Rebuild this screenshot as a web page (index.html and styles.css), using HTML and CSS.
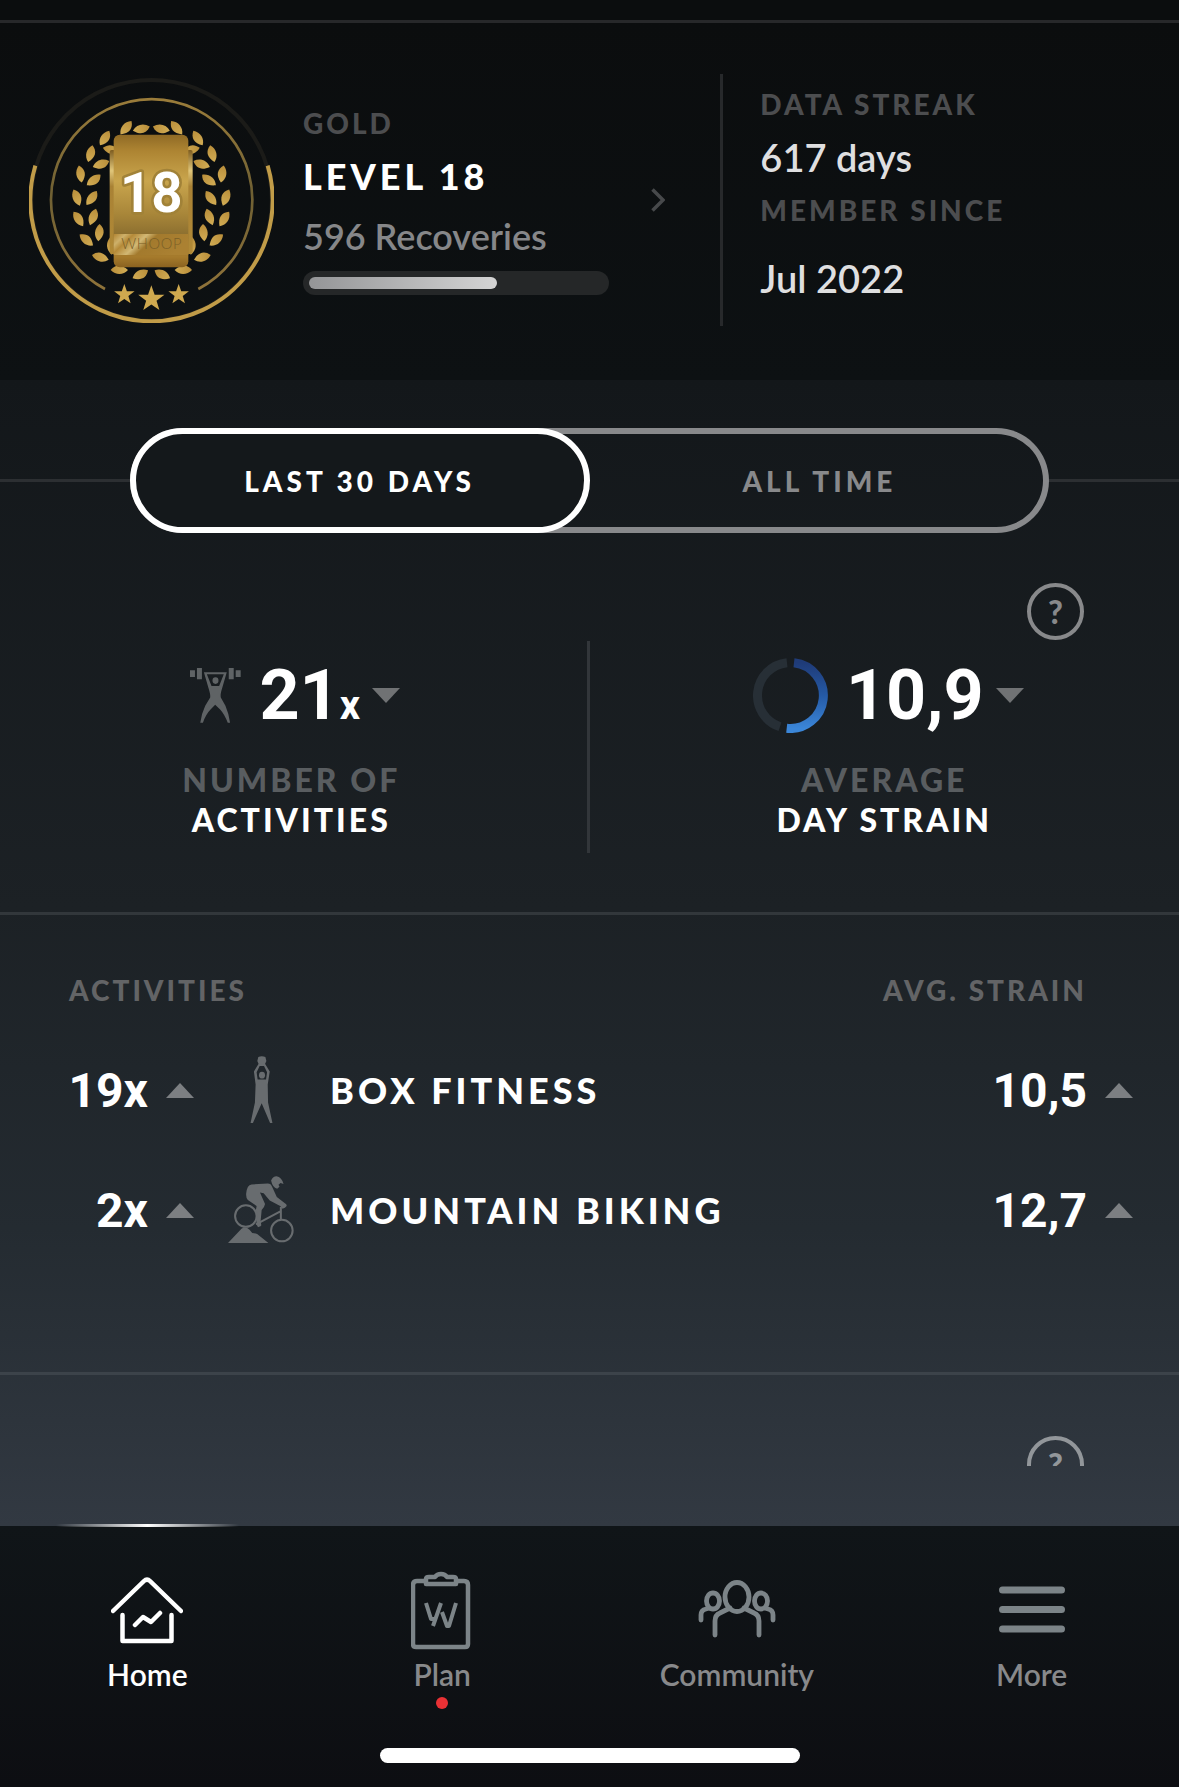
FILE: index.html
```html
<!DOCTYPE html>
<html lang="en">
<head>
    <meta charset="UTF-8">
    <meta name="viewport" content="width=device-width, initial-scale=1.0">
    <title>Profile</title>
    <link rel="stylesheet" href="styles.css">
</head>
<body>
    <!-- Level and membership -->
    <header class="profile">
        <a class="level" href="#level">
            <svg class="badge" viewBox="87 84 735 735" aria-hidden="true">
                <defs>
                    <linearGradient id="band" x1="0" y1="0" x2="0" y2="1">
                        <stop offset="0" stop-color="#8f6a25"/>
                        <stop offset=".12" stop-color="#ad8432"/>
                        <stop offset=".35" stop-color="#c9a54d"/>
                        <stop offset=".6" stop-color="#a88639"/>
                        <stop offset=".75" stop-color="#8d7030"/>
                        <stop offset=".92" stop-color="#a67b2c"/>
                        <stop offset="1" stop-color="#8a6220"/>
                    </linearGradient>
                    <linearGradient id="rail" x1="0" y1="0" x2="0" y2="1">
                        <stop offset="0" stop-color="#7d5c20"/>
                        <stop offset=".2" stop-color="#e0c67a"/>
                        <stop offset=".35" stop-color="#a98235"/>
                        <stop offset="1" stop-color="#b08936"/>
                    </linearGradient>
                    <linearGradient id="clasp" x1="0" y1="0" x2="1" y2=".3">
                        <stop offset="0" stop-color="#b18431"/>
                        <stop offset=".15" stop-color="#cdb06a"/>
                        <stop offset=".25" stop-color="#b58a38"/>
                        <stop offset=".42" stop-color="#d2b874"/>
                        <stop offset=".55" stop-color="#a37a2d"/>
                        <stop offset="1" stop-color="#ab8132"/>
                    </linearGradient>
                    <linearGradient id="leaf-fill" x1="0" y1="0" x2="0" y2="1">
                        <stop offset="0" stop-color="#b98e3a"/>
                        <stop offset="1" stop-color="#d2ad55"/>
                    </linearGradient>
                    <linearGradient id="inner" x1="0" y1="0" x2="0" y2="1">
                        <stop offset="0" stop-color="#9a7c3a"/>
                        <stop offset=".5" stop-color="#6f6033"/>
                        <stop offset="1" stop-color="#8f733a"/>
                    </linearGradient>
                    <path id="leaf" d="M2-26C19-10 18 8-2 26C-17 10-15-12 2-26z" fill="url(#leaf-fill)"/>
                    <path id="star" d="M0-10L2.4-3.2L9.6-3.1L3.8 1.2L5.9 8.1L0 4L-5.9 8.1L-3.8 1.2L-9.6-3.1L-2.4-3.2z" fill="#cfa94f"/>
                    <g id="branch">
                        <use href="#leaf" transform="translate(378 233) rotate(35)"/>
                        <use href="#leaf" transform="translate(424 236) rotate(72)"/>
                        <use href="#leaf" transform="translate(314 264) rotate(28)"/>
                        <use href="#leaf" transform="translate(271 311) rotate(10)"/>
                        <use href="#leaf" transform="translate(241 372) rotate(-14)"/>
                        <use href="#leaf" transform="translate(230 443) rotate(-26)"/>
                        <use href="#leaf" transform="translate(235 507) rotate(-38)"/>
                        <use href="#leaf" transform="translate(259 570) rotate(-55)"/>
                        <use href="#leaf" transform="translate(301 622) rotate(-78)"/>
                        <use href="#leaf" transform="translate(358 660) rotate(-94)"/>
                        <use href="#leaf" transform="translate(421 673) rotate(58)"/>
                        <use href="#leaf" transform="translate(334 300) rotate(-80)"/>
                        <use href="#leaf" transform="translate(303 342) rotate(66)"/>
                        <use href="#leaf" transform="translate(281 390) rotate(48)"/>
                        <use href="#leaf" transform="translate(275 444) rotate(32)"/>
                        <use href="#leaf" transform="translate(279 501) rotate(16)"/>
                        <use href="#leaf" transform="translate(297 548) rotate(0)"/>
                        <use href="#leaf" transform="translate(333 588) rotate(-10)"/>
                    </g>
                </defs>
                <circle cx="454.500" cy="451" r="361" fill="none" stroke="#1b1b18" stroke-width="12"/>
                <path d="M106 347A363.500 363.500 0 1 0 803 347" fill="none" stroke="#c19c48" stroke-width="12"/>
                <path d="M315 717A302 302 0 1 1 595 717" fill="none" stroke="url(#inner)" stroke-width="8"/>
                <use href="#branch"/>
                <use href="#branch" transform="translate(908 0) scale(-1 1)"/>
                <rect x="329" y="300" width="18" height="312" rx="6" fill="url(#rail)"/>
                <rect x="560" y="300" width="18" height="312" rx="6" fill="url(#rail)"/>
                <rect x="341" y="254" width="224" height="398" rx="18" fill="url(#band)"/>
                <rect x="341" y="552" width="224" height="63" fill="url(#clasp)"/>
                <text class="badge-brand" x="455" y="598" text-anchor="middle">WHOOP</text>
                <text class="badge-number" x="454" y="486" text-anchor="middle">18</text>
                <use href="#star" transform="translate(373 734) scale(3.2)"/>
                <use href="#star" transform="translate(454 747) scale(4.1)"/>
                <use href="#star" transform="translate(536 734) scale(3.2)"/>
            </svg>
            <div class="level-text">
                <div class="caption">GOLD</div>
                <div class="level-name">LEVEL 18</div>
                <div class="recoveries">596 Recoveries</div>
                <div class="bar"><div class="bar-fill" style="width: 64%"></div></div>
            </div>
            <svg class="chevron" viewBox="0 0 14 24" aria-hidden="true">
                <path d="M1.500 1.500L12 12L1.500 22.500" fill="none" stroke="#47494b" stroke-width="3.500"/>
            </svg>
        </a>
        <div class="member">
            <div class="caption">DATA STREAK</div>
            <div class="member-value">617 days</div>
            <div class="caption">MEMBER SINCE</div>
            <div class="member-value since">Jul 2022</div>
        </div>
    </header>

    <main>
        <div class="period">
            <div class="toggle">
                <button type="button" class="active">LAST 30 DAYS</button>
                <button type="button">ALL TIME</button>
            </div>
        </div>

        <button type="button" class="help" aria-label="Help">?</button>

        <section class="stats">
            <div class="stat">
                <div class="stat-value">
                    <svg class="lifter" viewBox="96 104 154 170" fill="#5f6365" aria-hidden="true">
                        <path d="M96 114h15v20h-15zM117 107h15v34h-15zM213 107h15v34h-15zM234 114h15v20h-15z"/>
                        <path d="M138 120H207L193 168Q187 186 189 196L203 221Q213 244 217 272H210Q200 246 187 232L172 218L158 232Q144 246 135 272H127Q131 244 142 221L157 196Q158 186 152 168zM147 126L161 161H184L198 126z" fill-rule="evenodd"/>
                        <ellipse cx="173" cy="145" rx="9" ry="10"/>
                    </svg>
                    <span class="number">21<small>x</small></span>
                    <span class="arrow down"></span>
                </div>
                <div class="stat-label">NUMBER OF</div>
                <div class="stat-name">ACTIVITIES</div>
            </div>
            <div class="stat">
                <div class="stat-value">
                    <svg class="ring" viewBox="0 0 75 75" fill="none" stroke-width="9" aria-hidden="true">
                        <defs>
                            <linearGradient id="strain" x1="0" y1="0" x2="0" y2="1">
                                <stop offset="0" stop-color="#1f3b78"/>
                                <stop offset=".5" stop-color="#255aa6"/>
                                <stop offset="1" stop-color="#3b86d8"/>
                            </linearGradient>
                        </defs>
                        <path d="M41 4.700A33 33 0 1 1 33.700 70.300" stroke="url(#strain)"/>
                        <path d="M27 68.800A33 33 0 0 1 34 4.700" stroke="#272f36"/>
                    </svg>
                    <span class="number">10,9</span>
                    <span class="arrow down"></span>
                </div>
                <div class="stat-label">AVERAGE</div>
                <div class="stat-name">DAY STRAIN</div>
            </div>
        </section>

        <section class="activities">
            <table>
                <thead>
                    <tr>
                        <th class="head-left" colspan="4">ACTIVITIES</th>
                        <th class="head-right">AVG. STRAIN</th>
                        <td></td>
                    </tr>
                </thead>
                <tbody>
                    <tr>
                        <td class="count">19x</td>
                        <td class="trend"><span class="arrow up"></span></td>
                        <td class="icon">
                            <svg viewBox="24 20 196 200" fill="#686c6f" aria-hidden="true">
                                <path d="M114 23Q124 18 135 23L138 35L134 44H115L111 35z"/>
                                <path d="M115 43H134L148 66L142 105L143 158L156 219H149L124 160L98 219H91L104 158L106 105L101 66zM118 50L109 68L112 90H137L140 68L131 50z" fill-rule="evenodd"/>
                                <ellipse cx="125" cy="77" rx="9" ry="10"/>
                            </svg>
                        </td>
                        <td class="name">BOX FITNESS</td>
                        <td class="strain">10,5</td>
                        <td class="trend"><span class="arrow up"></span></td>
                    </tr>
                    <tr>
                        <td class="count">2x</td>
                        <td class="trend"><span class="arrow up"></span></td>
                        <td class="icon">
                            <svg viewBox="24 380 196 200" fill="#686c6f" aria-hidden="true">
                                <path d="M24 579L64 537Q76 528 88 540L96 549Q110 550 118 558L144 579z"/>
                                <path d="M152 393Q158 381 168 381Q184 384 189 404L180 401L174 406L177 412L170 418Q156 413 152 393z"/>
                                <path d="M94 405L142 402Q152 402 155 412L169 442L196 463Q202 469 193 474L186 477L179 469L148 453L130 431L119 429L134 463Q132 474 124 481L121 513L123 527L112 529L109 524L107 480L109 469L83 451Q77 445 78 432Q80 407 94 405z"/>
                                <g fill="none" stroke="#686c6f" stroke-width="6">
                                    <circle cx="77" cy="499" r="32"/>
                                    <circle cx="184" cy="542" r="32"/>
                                    <path d="M107 524L181 484M181 472V510M121 526L112 529"/>
                                </g>
                            </svg>
                        </td>
                        <td class="name">MOUNTAIN BIKING</td>
                        <td class="strain">12,7</td>
                        <td class="trend"><span class="arrow up"></span></td>
                    </tr>
                </tbody>
            </table>
        </section>

        <section class="more-stats">
            <div class="peek">
                <button type="button" class="help" aria-label="Help">?</button>
            </div>
        </section>
    </main>

    <!-- Bottom navigation -->
    <nav class="tabs">
        <ul>
            <li class="current">
                <a href="#home">
                    <svg width="72" height="80" viewBox="0 0 72 80" fill="none" stroke="#fff" stroke-width="4.500" stroke-linecap="round" stroke-linejoin="round" aria-hidden="true">
                        <path d="M2 41L33 11Q36 8 39 11L70 41M11.500 45V71H60.500V45M24 55L32 47L40 52L49 43"/>
                    </svg>
                    Home
                </a>
            </li>
            <li class="notice">
                <a href="#plan">
                    <svg width="62" height="80" viewBox="0 0 62 80" fill="none" stroke="#7c8488" stroke-width="4.500" stroke-linejoin="round" aria-hidden="true">
                        <path d="M15 11H6Q2 11 2 15V74Q2 77 5 77H54Q57 77 57 74V15Q57 11 53 11H45"/>
                        <path d="M15 14V9Q15 7 18 7H24Q26 4 30 4Q34 4 36 7H42Q45 7 45 9V14z"/>
                        <path d="M15 33L20 49H23M30 33L22 56M31 42L36 56H38L45 33" stroke-width="4"/>
                    </svg>
                    Plan
                </a>
            </li>
            <li>
                <a href="#community">
                    <svg width="78" height="80" viewBox="0 0 78 80" fill="none" stroke="#7c8488" stroke-width="4.800" stroke-linecap="round" aria-hidden="true">
                        <ellipse cx="39" cy="27" rx="12" ry="14.500"/>
                        <ellipse cx="15" cy="31" rx="6.500" ry="8"/>
                        <ellipse cx="63" cy="31" rx="6.500" ry="8"/>
                        <path d="M17 65V51Q17 45 22 43L32 38M61 65V51Q61 45 56 43L46 38M3 50V45Q3 40 8 39L11 38M75 50V45Q75 40 70 39L67 38"/>
                    </svg>
                    Community
                </a>
            </li>
            <li>
                <a href="#more">
                    <svg width="66" height="80" viewBox="0 0 66 80" stroke="#7c8488" stroke-width="7" stroke-linecap="round" aria-hidden="true">
                        <path d="M3.500 20H62.500M3.500 39.500H62.500M3.500 59H62.500"/>
                    </svg>
                    More
                </a>
            </li>
        </ul>
        <div class="home-indicator"></div>
    </nav>
</body>
</html>
```

FILE: styles.css
```css
* {
    box-sizing: border-box;
}
body {
    margin: 0;
    min-height: 100vh;
    display: flex;
    flex-direction: column;
    font-family: Lato, "Open Sans", sans-serif;
    color: #fff;
    background-color: #0b0d0e;
}
a {
    color: inherit;
    text-decoration: none;
}
button {
    font-family: inherit;
    color: inherit;
    background: none;
    border: none;
    padding: 0;
    cursor: pointer;
}
svg {
    display: block;
}

/* profile */
.profile {
    display: grid;
    grid-template-columns: 61.1% 1fr;
    margin-top: 20px;
    padding: 51px 0 54px;
    border-top: 3px solid #27282a;
    background: linear-gradient(#0b0d0e, #0d1113);
}
.level {
    display: flex;
    align-items: center;
    padding-left: 29px;
}
.badge {
    width: 245px;
    flex: none;
}
.badge-number {
    font: bold 164px Roboto, sans-serif;
    fill: #fff;
    stroke: #a18238;
    stroke-width: 16px;
    stroke-linejoin: round;
    paint-order: stroke;
}
.badge-brand {
    font: 300 44px Lato, sans-serif;
    letter-spacing: 2px;
    fill: #7a5f27;
}
.level-text {
    width: 306px;
    margin-left: 29px;
}
.caption {
    font-size: 28px;
    line-height: 34px;
    font-weight: 900;
    letter-spacing: 3px;
    color: #4c4d4f;
}
.level-name {
    font-size: 36px;
    line-height: 72px;
    font-weight: 900;
    letter-spacing: 4px;
}
.recoveries {
    font-size: 36px;
    line-height: 48px;
    font-weight: 600;
    color: #868789;
}
.bar {
    height: 24px;
    margin-top: 11px;
    padding: 6px;
    border-radius: 12px;
    background-color: #252728;
}
.bar-fill {
    height: 12px;
    border-radius: 6px;
    background: linear-gradient(90deg, #949597, #d4d4d4);
}
.chevron {
    width: 14px;
    margin-left: 42px;
}
.member {
    display: flex;
    flex-direction: column;
    justify-content: center;
    min-height: 252px;
    padding-left: 37px;
    border-left: 3px solid #27292b;
}
.member-value {
    font-size: 38px;
    line-height: 72px;
    font-weight: 600;
    color: #dfdfe0;
}
.since {
    margin-top: 15px;
}

/* stats */
main {
    flex: 1;
    background: linear-gradient(#13171a, #1c2125 46%, #242b31 74%, #323942);
}
.period {
    display: flex;
    align-items: center;
    padding-top: 48px;
}
.period::before,
.period::after {
    content: "";
    flex: 1;
    height: 3px;
    background-color: #2c2f32;
}
.toggle {
    display: flex;
    width: 78%;
    border-radius: 53px;
    box-shadow: inset 0 0 0 6px #88898b;
}
.toggle button {
    width: 50%;
    height: 105px;
    font-size: 28px;
    font-weight: 900;
    letter-spacing: 4px;
    color: #88898b;
}
.toggle .active {
    color: #fff;
    border: 6px solid #fff;
    border-radius: 53px;
    background-color: #14181b;
}
.help {
    display: block;
    width: 57px;
    height: 57px;
    margin: 50px 95px 0 auto;
    border: 4px solid #88898b;
    border-radius: 50%;
    font-size: 32px;
    line-height: 48px;
    font-weight: 900;
    color: #88898b;
}
.stats {
    display: grid;
    grid-template-columns: 1fr 1fr;
    padding: 1px 0 59px;
    border-bottom: 3px solid #32373b;
}
.stat {
    height: 212px;
    padding-right: 4px;
    border-right: 3px solid #32363a;
    text-align: center;
}
.stat:last-child {
    padding-right: 0;
    border-right: none;
}
.stat-value {
    display: flex;
    justify-content: center;
    align-items: center;
    height: 108px;
    margin-bottom: 11px;
    padding-left: 8px;
}
.lifter {
    width: 51px;
    margin-right: 18px;
}
.ring {
    width: 75px;
    margin-right: 18px;
}
.number {
    font-family: Roboto, sans-serif;
    font-size: 70px;
    font-weight: bold;
}
.number small {
    font-size: 40px;
}
.arrow {
    display: inline-block;
    border-left: 14px solid transparent;
    border-right: 14px solid transparent;
}
.down {
    margin-left: 12px;
    border-top: 15px solid #707274;
}
.up {
    border-bottom: 15px solid #7c7f82;
}
.stat-label,
.stat-name {
    font-size: 32px;
    line-height: 40px;
    font-weight: 900;
    letter-spacing: 3px;
}
.stat-label {
    color: #595d60;
}

/* activities */
.activities {
    padding: 35px 0 102px;
    border-bottom: 3px solid #3c434a;
}
table {
    width: 100%;
    border-collapse: collapse;
}
th,
td {
    padding: 0;
}
thead tr {
    height: 80px;
}
tbody tr {
    height: 120px;
}
th {
    font-size: 28px;
    font-weight: 900;
    letter-spacing: 3px;
    color: #636466;
}
.head-left {
    padding-left: 69px;
    text-align: left;
}
.head-right {
    text-align: right;
}
.count,
.strain {
    font-family: Roboto, sans-serif;
    font-size: 48px;
    font-weight: bold;
    text-align: right;
}
.count {
    width: 148px;
}
.trend {
    width: 80px;
    padding-left: 18px;
    line-height: 0;
}
.trend:last-child {
    width: 92px;
}
.icon {
    width: 66px;
}
.name {
    padding-left: 36px;
    font-size: 36px;
    font-weight: 900;
    letter-spacing: 4px;
}
.more-stats {
    padding: 61px 0 60px;
}
.peek {
    height: 30px;
    overflow: hidden;
}
.peek .help {
    margin-top: 0;
    color: #92969a;
    border-color: #92969a;
}

/* tab bar */
.tabs {
    padding: 44px 0 24px;
    background: linear-gradient(#101518, #0d0e12);
}
.tabs ul {
    display: grid;
    grid-template-columns: repeat(4, 1fr);
    margin: 0;
    padding: 0;
    list-style: none;
}
.tabs li {
    position: relative;
    height: 178px;
}
.tabs a {
    display: flex;
    flex-direction: column;
    align-items: center;
    gap: 7px;
    font-size: 30px;
    line-height: 34px;
    font-weight: 600;
    color: #88898b;
}
.tabs .current a {
    color: #fff;
}
.current::before {
    content: "";
    position: absolute;
    top: -46px;
    left: 19%;
    width: 62%;
    height: 3px;
    background: linear-gradient(90deg, transparent, #fff, transparent);
}
.notice::after {
    content: "";
    position: absolute;
    top: 127px;
    left: 50%;
    width: 12px;
    height: 12px;
    margin-left: -6px;
    border-radius: 50%;
    background-color: #e93135;
}
.home-indicator {
    width: 420px;
    max-width: 60%;
    height: 15px;
    margin: 0 auto;
    border-radius: 8px;
    background-color: #fff;
}
```
